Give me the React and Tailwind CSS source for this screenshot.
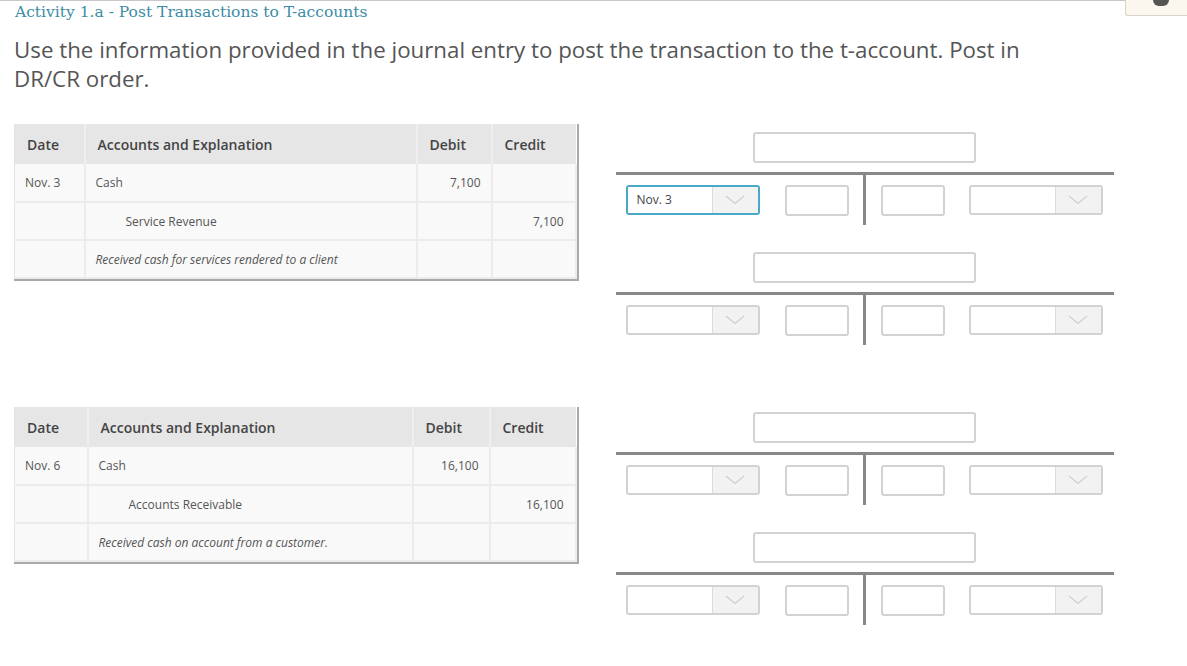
import React from "react";

const sans = { fontFamily: '"Open Sans", "Noto Sans", sans-serif' };

const entries = [
  {
    cols: ["w-[70px]", "w-[332px]", "w-[75px]", "w-[84px]"],
    date: "Nov. 3",
    debitAcct: "Cash",
    creditAcct: "Service Revenue",
    amount: "7,100",
    note: "Received cash for services rendered to a client",
  },
  {
    cols: ["w-[73px]", "w-[325px]", "w-[77px]", "w-[86px]"],
    date: "Nov. 6",
    debitAcct: "Cash",
    creditAcct: "Accounts Receivable",
    amount: "16,100",
    note: "Received cash on account from a customer.",
  },
];

function Journal({ e }) {
  const [c1, c2, c3, c4] = e.cols;
  const cell = "bg-[#f9f9f9] border-r-2 border-b-2 border-[#ececec] h-[38px] px-[10px] pt-[11px] text-[12px] text-[#555] leading-[16px]";
  return (
    <table className="border-collapse border-l border-l-[#e2e2e2] shadow-[1px_1px_0_1px_#a9a9a9] table-fixed w-[561px]" style={sans}>
      <thead>
        <tr className="bg-[#e6e6e6] h-[40px] text-[14px] text-[#444] font-semibold">
          <th className={`${c1} text-left pl-[12px] font-semibold border-r-2 border-[#efefef]`}>Date</th>
          <th className={`${c2} text-left pl-[12px] font-semibold border-r-2 border-[#efefef]`}>Accounts and Explanation</th>
          <th className={`${c3} text-left pl-[12px] font-semibold border-r-2 border-[#efefef]`}>Debit</th>
          <th className={`${c4} text-left pl-[12px] font-semibold`}>Credit</th>
        </tr>
      </thead>
      <tbody>
        <tr>
          <td className={`${cell} align-top`}>{e.date}</td>
          <td className={`${cell} align-top`}>{e.debitAcct}</td>
          <td className={`${cell} align-top text-right`}>{e.amount}</td>
          <td className={`${cell} align-top`}></td>
        </tr>
        <tr>
          <td className={`${cell} align-top`}></td>
          <td className={`${cell} align-top pl-[40px]`}>{e.creditAcct}</td>
          <td className={`${cell} align-top`}></td>
          <td className={`${cell} align-top text-right pr-[11px]`}>{e.amount}</td>
        </tr>
        <tr>
          <td className={`${cell} align-top border-b-0`}></td>
          <td className={`${cell} align-top border-b-0 italic text-[11px]`}>{e.note}</td>
          <td className={`${cell} align-top border-b-0`}></td>
          <td className={`${cell} align-top border-b-0`}></td>
        </tr>
      </tbody>
    </table>
  );
}

function Chevron() {
  return (
    <svg width="20" height="10" viewBox="0 0 20 10" fill="none">
      <path d="M1 1 L10 8.5 L19 1" stroke="#cfcfcf" strokeWidth="1.2" />
    </svg>
  );
}

function Select({ value, focused }) {
  return (
    <div
      className={`flex w-[134px] h-[30px] rounded-[3px] border-2 overflow-hidden ${focused ? "border-[#4aa9c9]" : "border-[#d2d2d2]"}`}
    >
      <div className="flex-1 bg-white flex items-center pl-[9px] text-[12px] text-[#444]" style={sans}>
        {value}
      </div>
      <div className="w-[46px] bg-[#f2f2f2] border-l border-[#dcdcdc] flex items-center justify-center">
        <Chevron />
      </div>
    </div>
  );
}

function Box({ className }) {
  return <div className={`bg-white border-2 border-[#d2d2d2] rounded-[3px] ${className}`} />;
}

function TAccount({ date }) {
  return (
    <div className="w-[498px] flex flex-col items-center">
      <Box className="w-[223px] h-[31px]" />
      <div className="w-full h-[3px] bg-[#888] mt-[9px]" />
      <div className="w-full flex items-start">
        <div className="w-[247px] flex justify-between pl-[10px] pr-[14px] pt-[10px]">
          <Select value={date} focused={!!date} />
          <Box className="w-[64px] h-[31px]" />
        </div>
        <div className="w-[3px] h-[50px] bg-[#888]" />
        <div className="flex-1 flex justify-between pl-[15px] pr-[11px] pt-[10px]">
          <Box className="w-[64px] h-[31px]" />
          <Select />
        </div>
      </div>
    </div>
  );
}

export default function App() {
  return (
    <div className="w-[1187px] h-[666px] bg-white relative overflow-hidden">
      <div className="border-t border-[#c8c8c8] mr-[62px]" />
      <div className="absolute right-0 top-0 w-[62px] h-[16px] bg-[#fbf6ee] border-l border-b border-[#d8d4cc] rounded-bl-[3px] flex justify-center">
        <div className="w-[16px] h-[6px] bg-[#555] rounded-b-full ml-[8px]" />
      </div>
      <h1
        className="pl-[15px] text-[15.5px] leading-[22px] text-[#3b8ca6]"
        style={{ fontFamily: '"DejaVu Serif", "Liberation Serif", serif' }}
      >
        Activity 1.a - Post Transactions to T-accounts
      </h1>
      <p className="pl-[14px] pt-[12px] w-[1040px] text-[22.3px] leading-[29px] text-[#555]" style={sans}>
        Use the information provided in the journal entry to post the transaction to the t-account. Post in DR/CR order.
      </p>
      <div className="flex flex-col gap-[31px] pt-[31px]">
        {entries.map((e, i) => (
          <div key={i} className="flex h-[249px]">
            <div className={`pl-[14px] ${i === 1 ? "pt-[3px]" : ""}`}>
              <Journal e={e} />
            </div>
            <div className="flex flex-col gap-[27px] pl-[39px] pt-[8px]">
              <TAccount date={i === 0 ? "Nov. 3" : undefined} />
              <TAccount />
            </div>
          </div>
        ))}
      </div>
    </div>
  );
}
